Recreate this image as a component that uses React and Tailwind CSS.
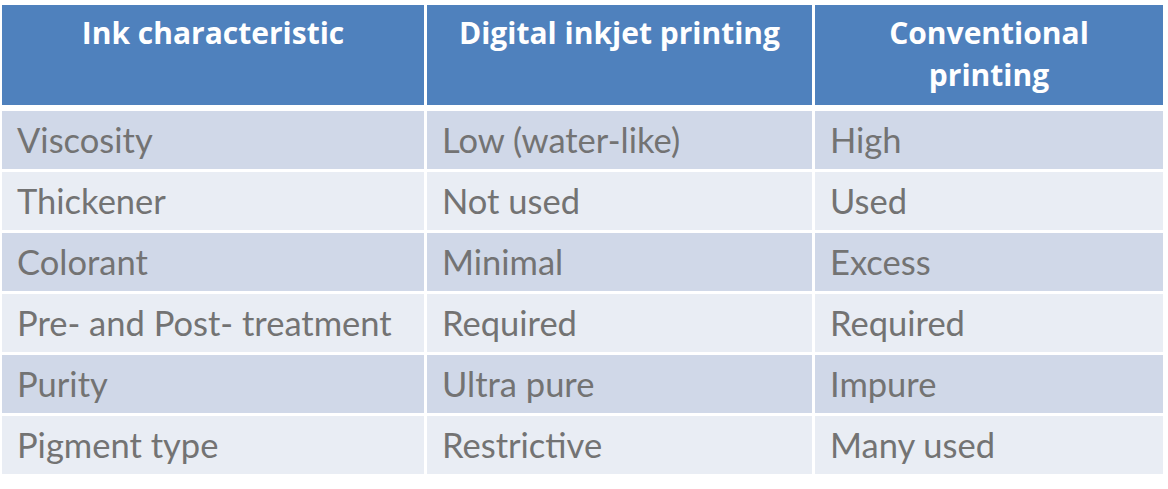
import React from 'react';

const rows = [
    ['Viscosity', 'Low (water-like)', 'High'],
    ['Thickener', 'Not used', 'Used'],
    ['Colorant', 'Minimal', 'Excess'],
    ['Pre- and Post- treatment', 'Required', 'Required'],
    ['Purity', 'Ultra pure', 'Impure'],
    ['Pigment type', 'Restrictive', 'Many used'],
];

const headers = ['Ink characteristic', 'Digital inkjet printing', 'Conventional printing'];

const App = () => {
    return (
        <div className="w-[1168px] h-[489px] bg-white pt-[5px] pl-[2px]" style={{ fontFamily: 'Lato, "Open Sans", sans-serif' }}>
            <div className="grid grid-cols-[422px_385px_348px] gap-x-[3px] gap-y-[3px]">
                {headers.map((h, idx) => (
                    <div
                        key={h}
                        className={
                            "h-[100px] mb-[3px] bg-[#4f81bd] text-white font-bold text-[30px] leading-[42px] text-center pt-[7px] font-['Open_Sans',sans-serif] " +
                            (idx === 2 ? 'px-[40px]' : 'px-[8px]')
                        }
                    >
                        {h}
                    </div>
                ))}
                {rows.map((r, i) =>
                    r.map((cell, j) => (
                        <div
                            key={i + '-' + j}
                            className={
                                'h-[58px] flex items-center pl-[15px] text-[34.5px] text-[#737373] ' +
                                (i % 2 === 0 ? 'bg-[#d0d8e8]' : 'bg-[#e9edf4]')
                            }
                        >
                            {cell}
                        </div>
                    ))
                )}
            </div>
        </div>
    );
};

export default App;
